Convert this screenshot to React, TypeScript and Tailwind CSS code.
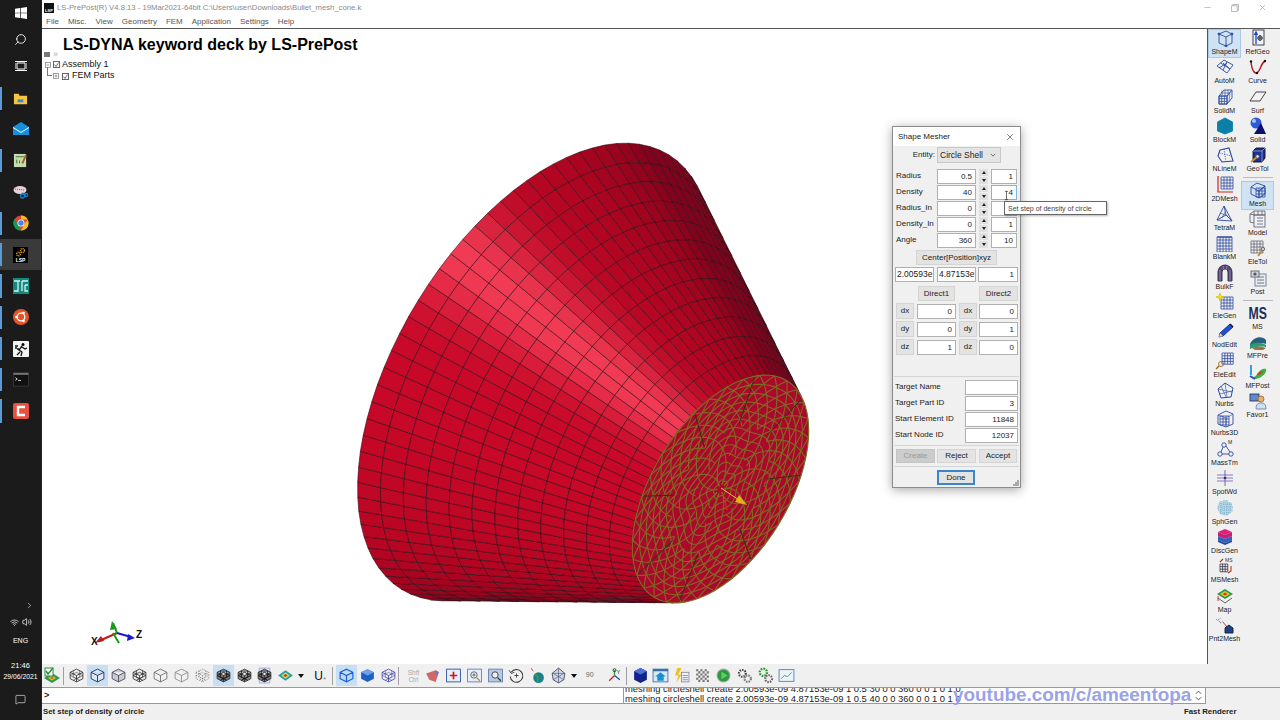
import type { ReactNode } from 'react';
import { ChevronRight, MessageSquare, Minus, Search, Volume2, Wifi, X } from 'lucide-react';

// ---- cone geometry, page coordinates ----
const AX = [0.524, -0.852];
const BX = [0.852, 0.524];
const FAR = { c: [535, 372], a: 255, b: 137 };
const NEAR = { c: [720.5, 489], a: 127, b: 68 };
const RINGS = 12;
const SEGS = 84;

const pt = (u: number, v: number) => {
  const cx = FAR.c[0] + (NEAR.c[0] - FAR.c[0]) * v;
  const cy = FAR.c[1] + (NEAR.c[1] - FAR.c[1]) * v;
  const a = (FAR.a + (NEAR.a - FAR.a) * v) * Math.cos(u);
  const b = (FAR.b + (NEAR.b - FAR.b) * v) * Math.sin(u);
  return [cx + a * AX[0] + b * BX[0], cy + a * AX[1] + b * BX[1]];
};

const shade = (u: number) => {
  const deg = (u * 180) / Math.PI;
  const diff = Math.max(0, Math.cos(((deg + 105) * Math.PI) / 180));
  const spec = Math.pow(Math.max(0, Math.cos(((deg + 78) * Math.PI) / 180)), 42);
  const r = 128 + 72 * Math.pow(diff, 0.6) + 46 * spec;
  const g = 2 + 6 * diff + 52 * spec;
  const b = 28 + 12 * diff + 46 * spec;
  return `rgb(${Math.round(r)},${Math.round(g)},${Math.round(b)})`;
};

const quads: { d: string; fill: string }[] = [];
for (let i = 0; i < SEGS; i++) {
  const u0 = (i / SEGS) * Math.PI * 2;
  const u1 = ((i + 1) / SEGS) * Math.PI * 2;
  for (let j = 0; j < RINGS; j++) {
    const p = [pt(u0, j / RINGS), pt(u1, j / RINGS), pt(u1, (j + 1) / RINGS), pt(u0, (j + 1) / RINGS)];
    let area = 0;
    p.forEach((q, k) => {
      const n = p[(k + 1) % 4];
      area += q[0] * n[1] - n[0] * q[1];
    });
    if (area > 0) quads.push({ d: p.map((q) => q.map((x) => x.toFixed(1)).join(',')).join(' '), fill: shade(u0) });
  }
}

const capPt = (r: number, t: number) => {
  const a = NEAR.a * r * Math.cos(t);
  const b = NEAR.b * r * Math.sin(t);
  return `${(NEAR.c[0] + a * AX[0] + b * BX[0]).toFixed(1)},${(NEAR.c[1] + a * AX[1] + b * BX[1]).toFixed(1)}`;
};

const capLines: string[] = [];
for (let i = 1; i <= 13; i++) {
  const pts: string[] = [];
  for (let k = 0; k <= 72; k++) {
    const t = (k / 72) * Math.PI * 2;
    const wob = 1 - 0.12 * (1 - i / 13) * Math.cos(t * 5 + 0.6);
    pts.push(capPt((i / 13) * wob, t));
  }
  capLines.push(pts.join(' '));
}
// thin the fan out toward the middle so it stays an open hatch
[-1, 1].forEach((dir) => {
  for (let i = 0; i < 32; i++) {
    const from = i % 4 === 0 ? 0.04 : i % 2 === 0 ? 0.3 : 0.55;
    const pts: string[] = [];
    for (let k = 0; k <= 14; k++) {
      const r = from + ((1 - from) * k) / 14;
      pts.push(capPt(r, (i / 32) * Math.PI * 2 + dir * (1 - r) * 1.3));
    }
    capLines.push(pts.join(' '));
  }
});

function Cone() {
  const spokes = [0.3, 1.1, 1.9, 2.75, 3.5, 4.3, 5.1, 5.8];
  return (
    <svg viewBox="42 29 1165 635" className="absolute inset-0 w-full h-full">
      {quads.map((q, i) => (
        <polygon key={i} points={q.d} fill={q.fill} stroke="#300a10" strokeWidth="0.6" />
      ))}
      <ellipse cx={NEAR.c[0]} cy={NEAR.c[1]} rx={NEAR.a} ry={NEAR.b} transform={`rotate(-58.4 ${NEAR.c[0]} ${NEAR.c[1]})`} fill="#ac082c" />
      {capLines.map((l, i) => (
        <polyline key={i} points={l} fill="none" stroke="#7e6a22" strokeWidth="1.1" />
      ))}
      {spokes.map((t) => (
        <polyline key={t} points={`${capPt(0.58, t)} ${capPt(0.98, t + 0.03)}`} fill="none" stroke="#3a2a10" strokeWidth="1" />
      ))}
      <line x1="721" y1="488" x2="742" y2="502" stroke="#e8c030" strokeWidth="1" />
      <polygon points="747,505 735,502 739,495" fill="#e0b020" />
      <line x1="725" y1="500" x2="727" y2="510" stroke="#e03020" strokeWidth="1" />
    </svg>
  );
}

// ---- palette icons ----
const I = ({ children }: { children: ReactNode }) => (
  <svg viewBox="0 0 20 18" className="w-[20px] h-[18px]" fill="none" stroke="#2d4aa0" strokeWidth="0.9">
    {children}
  </svg>
);

const Grid = ({ x, y, n = 4, s = 3, c = '#2d4aa0' }: { x: number; y: number; n?: number; s?: number; c?: string }) => {
  let d = '';
  for (let i = 0; i <= n; i++) d += `M${x} ${y + i * s}h${n * s}M${x + i * s} ${y}v${n * s}`;
  return <path d={d} stroke={c} strokeWidth="0.8" />;
};

const icons: Record<string, ReactNode> = {
  ShapeM: <I><path d="M4 5l7-3 6 3v9l-6 3-7-3zM4 5l7 3 6-3M11 8v9" /><circle cx="4" cy="5" r="1" fill="#2d4aa0" /><circle cx="17" cy="5" r="1" fill="#2d4aa0" /><circle cx="11" cy="17" r="1" fill="#2d4aa0" /></I>,
  RefGeo: <I><rect x="5" y="1" width="11" height="15" fill="#eef3fb" stroke="#333" /><path d="M8 15V4M6.5 6L8 3l1.5 3" stroke="#1f3fd0" strokeWidth="1.3" /><circle cx="12" cy="9" r="2.2" stroke="#222" /><path d="M12 6v6M9.5 9h5" stroke="#222" /></I>,
  AutoM: <I><path d="M2 8l7-6 9 5-6 8zM5.5 5l9 5.5M8 12l4-8M4 10l8-5M15 11l-7-6" /></I>,
  Curve: <I><path d="M3 4c1 9 4 13 7 10s3-9 7-11" stroke="#b01818" strokeWidth="1.4" /><circle cx="3" cy="3.5" r="1.2" fill="#111" stroke="none" /><circle cx="17" cy="3" r="1.2" fill="#111" stroke="none" /><circle cx="9" cy="15" r="1.2" fill="#111" stroke="none" /></I>,
  SolidM: <I><path d="M4 8l5-6h8v8l-5 6H4zM4 8h8v8M12 8l5-6" /><Grid x={4} y={8} n={3} s={2.7} /><path d="M7 2.5v5M10 2v6M13 2v6M15 4l-1 10M6 5h9" strokeWidth="0.6" /></I>,
  Surf: <I><path d="M2 13l6-9h10l-6 9z" stroke="#333" fill="#f2f2f2" /></I>,
  BlockM: <I><path d="M10 1l7.5 4v9L10 17l-7.5-3V5z" fill="#0b7fa8" stroke="#0b7fa8" /></I>,
  Solid: <I><circle cx="8" cy="6" r="5.5" fill="#2d5bd8" stroke="none" /><circle cx="6" cy="4" r="2" fill="#a8c4f4" stroke="none" /><path d="M13 6l5 11H6z" fill="#10106a" stroke="none" /></I>,
  NLineM: <I><path d="M5 4l9-2 4 13-11 1-4-6z" strokeWidth="1.1" /><path d="M9 3l2 13M4.5 7l12 3" strokeDasharray="1 1.4" /></I>,
  GeoTol: <I><path d="M5 5l3-3h9v10l-3 4H5z" fill="#1b2f95" stroke="#111" /><path d="M5 5h9v11M14 5l3-3" stroke="#8898e0" /><path d="M3 16l6-5" stroke="#d09030" strokeWidth="2" /><circle cx="9.5" cy="10.5" r="1.8" fill="#ddd" stroke="#555" /></I>,
  '2DMesh': <I><Grid x={6} y={1} n={4} s={3} /><path d="M3 0v16h15" stroke="#d02020" strokeWidth="1.2" /></I>,
  Mesh: <I><path d="M3 6l6-4 8 3-6 5zM3 6v7l8 4V10M11 10l6-5v8l-6 4" /><Grid x={8} y={7} n={3} s={3} /></I>,
  TetraM: <I><path d="M9 1L2 15l15 1zM9 1l2 9-9 5M11 10l6 6" /><path d="M5 8l8 3M7 13l3-6" strokeWidth="0.6" /></I>,
  Model: <I><rect x="6" y="5" width="11" height="12" fill="#eef2f8" stroke="#667" /><path d="M2 4l4-3h11v4H6zM2 4v8l4 1M9 8h6M9 11h6M9 14h6" stroke="#667" /><path d="M6 1v4M10 1v4M14 1v4" stroke="#667" /></I>,
  BlankM: <I><Grid x={2} y={3} n={5} s={3} /><path d="M2 3h15" strokeWidth="1.2" /></I>,
  EleTol: <I><Grid x={3} y={2} n={4} s={3} c="#667" /><path d="M10 17l5-6" stroke="#d08020" strokeWidth="1.6" /><circle cx="15" cy="10" r="1.7" fill="#ccc" stroke="#666" /></I>,
  BulkF: <I><path d="M3 17V8a7 7 0 0 1 14 0v9h-4V8a3 3 0 0 0-6 0v9z" fill="#5a4a78" stroke="#2a2440" /><path d="M5 6v11M15 6v11M8 2l1 4M12 2l-1 4" stroke="#a098b8" strokeWidth="0.7" /></I>,
  Post: <I><rect x="7" y="5" width="11" height="12" fill="#e8eef6" stroke="#778" /><path d="M9 8h7M9 11h7M9 14h7" stroke="#667" /><rect x="3" y="2" width="8" height="6" fill="#c9d3df" stroke="#666" /><circle cx="7" cy="5" r="1.6" fill="#555" stroke="none" /></I>,
  EleGen: <I><Grid x={6} y={4} n={4} s={3} /><path d="M5 0l1 3 3 1-3 1-1 3-1-3-3-1 3-1z" fill="#f0e020" stroke="#d8c818" /></I>,
  NodEdit: <I><path d="M4 15l1-4L15 2l3 3-10 9z" fill="#1f4ed8" stroke="#123080" /><path d="M4 15l1-4 3 3z" fill="#f0d090" stroke="none" /><path d="M15 2l3 3" stroke="#222" strokeWidth="1.6" /></I>,
  MFPre: <I><path d="M2 11c3-7 12-9 16-4v4c-5-2-12-1-16 3z" fill="#285f80" stroke="none" /><path d="M2 12c5-3 11-3 16 0v2c-6-1-11 0-16 2z" fill="#2d9a70" stroke="none" /><path d="M4 15c4-1 9-2 14 0l-3 2H7z" fill="#a07040" stroke="none" /></I>,
  EleEdit: <I><Grid x={7} y={1} n={4} s={2.8} /><circle cx="6" cy="12" r="2.5" stroke="#a06820" /><path d="M4 14l-3 3" stroke="#a06820" strokeWidth="1.5" /></I>,
  MFPost: <I><path d="M2 14c3 2 6-1 8-4s5-5 8-4c1 3-2 6-5 8s-7 3-11 0z" fill="#40b040" stroke="none" /><path d="M9 11c2-2 4-3 6-3-1 2-3 4-6 4z" fill="#e03030" stroke="none" /><path d="M3 2v10" stroke="#30a0e0" strokeWidth="2" /><path d="M2 13l5 3" stroke="#2050c0" strokeWidth="2" /></I>,
  Nurbs: <I><path d="M3 8l7-6 8 5-2 9-10 1z" strokeWidth="1" /><path d="M6 5l5 11M10 2l2 14M3 8l14 3M5 13l12-3" strokeWidth="0.6" /></I>,
  Favor1: <I><rect x="2" y="2" width="9" height="7" fill="#5a8ad0" stroke="#335" /><circle cx="13" cy="7" r="3" fill="#e8b070" stroke="#a07030" /><path d="M8 17c0-5 2-6 5-6s5 1 5 6z" fill="#cfe0f4" stroke="#6688aa" /></I>,
  Nurbs3D: <I><path d="M3 5l8-4 7 3v10l-7 3-8-3z" /><Grid x={5} y={6} n={3} s={3} /><path d="M3 5l8 3 7-4M11 8v9" strokeWidth="0.6" /></I>,
  MassTm: <I><circle cx="5" cy="14" r="2.2" /><circle cx="9" cy="5" r="2.2" /><circle cx="16" cy="14" r="2.2" /><path d="M6 12l2-5M11 6l4 6M7 14h7" /><text x="13" y="4" fontSize="5" stroke="none" fill="#222">M</text></I>,
  SpotWd: <I><path d="M2 6h16M2 9h16M2 12h16" stroke="#8878c8" strokeWidth="1" /><path d="M10 1v16" stroke="#6858a8" /><circle cx="10" cy="9" r="1.3" fill="#30307a" stroke="none" /></I>,
  SphGen: <I><path d="M4 3l7-2 6 4 1 7-6 5-7-2-3-6z" fill="#b8d8e6" stroke="none" /><path d="M4 5h13M3 8h15M3 11h14M5 14h10M6 2v14M9 1v16M12 1v16M15 3v12" stroke="#6ea0c0" strokeWidth="0.7" strokeDasharray="1 1" /></I>,
  DiscGen: <I><path d="M3 4l7-3 7 3-7 3z" fill="#e0207a" stroke="none" /><path d="M3 4v4l7 3 7-3V4l-7 3z" fill="#c82070" stroke="none" /><path d="M3 8v4l7 3 7-3V8l-7 3z" fill="#3060c0" stroke="none" /><path d="M3 12v2l7 3 7-3v-2l-7 3z" fill="#2048a0" stroke="none" /></I>,
  MSMesh: <I><Grid x={5} y={7} n={3} s={2.6} c="#334" /><path d="M5 5l3-3M16 9v5l-3 2" stroke="#c03020" strokeWidth="1.1" /><text x="10" y="5" fontSize="5" stroke="none" fill="#333">MS</text></I>,
  Map: <I><path d="M2 7l8-5 8 5-8 5z" fill="#2a9a50" stroke="none" /><path d="M5 7l5-3 5 3-5 3z" fill="#e0d020" stroke="none" /><path d="M7.5 7L10 5.5 12.5 7 10 8.5z" fill="#e03030" stroke="none" /><path d="M3 11l7 5 7-5" stroke="#555" /><path d="M3 9v5" stroke="#c02020" /></I>,
  Pnt2Mesh: <I><path d="M3 4l3-2M5 7l3-2" stroke="#667" strokeDasharray="1 1" /><path d="M8 6l4 5" stroke="#d02020" /><path d="M10 12l4-3 4 3v5H10z" fill="#1e3f90" stroke="#122" /><path d="M1 3l5 4" stroke="#667" strokeDasharray="1 1" /></I>,
};

function Tool({ name, active }: { name: string; active?: boolean }) {
  return (
    <div className={`w-[33px] h-[29.35px] flex flex-col items-center ${active ? 'bg-[#cfe3f5] shadow-[inset_0_0_0_1px_#a8cbe8]' : ''}`}>
      <div className="h-[18px] flex items-center justify-center">
        {name === 'MS' ? <span className="text-[17px] leading-none font-bold text-[#1c2f5c] [transform:scaleX(0.72)]">MS</span> : icons[name]}
      </div>
      <span className="text-[7px] leading-[9px] text-[#222] whitespace-nowrap">{name}</span>
    </div>
  );
}

// ---- bottom toolbar icons ----
const T = ({ children, active }: { children: ReactNode; active?: boolean }) => (
  <div className={`w-[20.9px] h-[21px] shrink-0 flex items-center justify-center ${active ? 'bg-[#c7dff4]' : ''}`}>
    <svg viewBox="0 0 16 16" className="w-[17px] h-[17px]" fill="none" stroke="#333" strokeWidth="0.8">
      {children}
    </svg>
  </div>
);

const cube = 'M2 5l6-3 6 3v6l-6 3-6-3zM2 5l6 3 6-3M8 8v6';
const cubeMesh = 'M5 3.5v6l6 3M11 3.5v6l-6 3M2 8l6 3 6-3M2 8l6-3 6 3';
const Sep = ({ className }: { className: string }) => <div className={`w-px h-[18px] bg-[#a0a0a0] shrink-0 ${className}`} />;
const Drop = ({ className = '' }: { className?: string }) => (
  <div className={`w-[10px] shrink-0 flex justify-center ${className}`}>
    <div className="border-x-[3px] border-x-transparent border-t-[4px] border-t-[#111]" />
  </div>
);

function BottomBar() {
  return (
    <div className="h-[24px] bg-[#f0f0f0] flex items-center border-b border-[#999] shrink-0">
      <div className="w-[18px] h-[18px] shrink-0 ml-[1px]">
        <svg viewBox="0 0 18 18" className="w-[18px] h-[18px]" fill="none">
          <path d="M1 11l8-5 8 5-8 5z" fill="#2a9a50" />
          <path d="M5 11l4-2.5 4 2.5-4 2.5z" fill="#e0c020" />
          <path d="M7.5 11L9 10l1.5 1L9 12z" fill="#e03020" />
          <rect x="2" y="1" width="8" height="8" fill="#fff" stroke="#2a8a40" />
          <path d="M3 4l2 3 5-6" stroke="#1f8f30" strokeWidth="1.4" />
        </svg>
      </div>
      <Sep className="ml-[2px]" />
      <div className="w-[2.5px] shrink-0" />
      <T><path d={cube} /><path d={cubeMesh} strokeWidth="0.5" /></T>
      <T active><path d={cube} stroke="#224" fill="#dbe9f6" /></T>
      <T><path d={cube} stroke="#445" fill="#c8ccd4" /></T>
      <T><path d={cube} /><path d={cubeMesh} /></T>
      <T><path d={cube} stroke="#666" /></T>
      <T><path d={cube} stroke="#888" /></T>
      <T><path d={cube} stroke="#777" strokeDasharray="1 1.2" /><path d={cubeMesh} stroke="#777" strokeDasharray="1 1.2" /></T>
      <T active><path d={cube} fill="#777" /><path d={cubeMesh} stroke="#111" /></T>
      <T><path d={cube} fill="#888" /><path d={cubeMesh} stroke="#111" /></T>
      <T><path d="M3 1h10v14H3z" stroke="#99a8d8" fill="#dfe6f8" /><path d={cube} fill="#777" /><path d={cubeMesh} stroke="#111" /></T>
      <T><path d="M1 8l7-5 7 5-7 5z" fill="#22a0b0" stroke="none" /><path d="M4 8l4-3 4 3-4 3z" fill="#e0d040" stroke="none" /><path d="M6 8l2-1.5L10 8l-2 1.5z" fill="#e03020" stroke="none" /></T>
      <Drop />
      <div className="w-[18px] ml-[3px] shrink-0 relative text-[#111] text-[12px] leading-none">
        <span className="pl-[5px]">U</span>
        <span className="absolute left-[14px] top-[6px] text-[#777] text-[7px]">*</span>
      </div>
      <Sep className="ml-[5px]" />
      <div className="w-[2.5px] shrink-0" />
      <T active><path d={cube} stroke="#1b5fd0" strokeWidth="1.1" fill="#bcd8f8" /></T>
      <T><path d="M2 5l6-3 6 3v6l-6 3-6-3z" fill="#1f5fc8" stroke="none" /><path d="M2 5l6 3 6-3-6-3z" fill="#6fa0e8" stroke="none" /></T>
      <T><path d={cube} stroke="#4a4ab0" /><path d={cubeMesh} stroke="#4a4ab0" strokeWidth="0.5" /></T>
      <Sep className="ml-[0px]" />
      <div className="w-[20px] ml-[4px] shrink-0 text-center text-[6.5px] leading-[7px] text-[#aaa]">Shft<br />Ctrl</div>
      <div className="ml-[-1px]" />
      <T><path d="M2 6l9-3 3 2-3 9-6-2z" fill="#d06868" stroke="none" /><path d="M11 3l3 2-3 3z" fill="#5b80c0" stroke="none" /></T>
      <T><rect x="1.5" y="2" width="13" height="12" stroke="#1f4aa0" fill="#e6eefa" /><path d="M8 4.5v7M4.5 8h7" stroke="#d01818" strokeWidth="1.6" /></T>
      <T><rect x="1.5" y="2" width="13" height="12" stroke="#5a7ab0" fill="#e6eefa" /><circle cx="7.5" cy="7.5" r="3" stroke="#555" /><path d="M10 10l3 3" stroke="#b09030" strokeWidth="1.2" /><path d="M6 7.5h3M7.5 6v3" stroke="#555" /></T>
      <T><rect x="1.5" y="2" width="13" height="12" stroke="#5a7ab0" fill="#b8cae0" /><circle cx="7.5" cy="7.5" r="3" stroke="#333" fill="#e8eef6" /><path d="M10 10l3 3" stroke="#333" strokeWidth="1.2" /></T>
      <T><path d="M3 5a6 6 0 1 1-1 4" stroke="#333" strokeWidth="1" /><path d="M1 3l2 3 3-1" stroke="#333" /><path d="M8 6v4M6 8h4" /></T>
      <T><circle cx="9" cy="10" r="5" fill="#1f7f90" stroke="none" /><path d="M6 7c2 1 3 3 2 7" stroke="#40a030" strokeWidth="1.6" /><path d="M2 1l2 3" stroke="#d03030" /></T>
      <T><path d="M8 1l6 5-1 6-5 3-5-3-1-6z" fill="#c8d8ee" stroke="#445" /><path d="M8 1v14M2 6h12M3 12l10-6M13 12L3 6" stroke="#445" strokeWidth="0.5" /></T>
      <Drop className="ml-[0.5px]" />
      <div className="w-[14px] ml-[3.5px] shrink-0 text-center text-[7px] text-[#666]">90</div>
      <div className="ml-[7px]" />
      <T><path d="M8 8l-5 5" stroke="#d02020" strokeWidth="1.2" /><path d="M8 8l5 4" stroke="#2040c0" strokeWidth="1.2" /><path d="M8 8V3" stroke="#20a030" strokeWidth="1.2" /><circle cx="8" cy="3" r="1.4" stroke="#222" /><text x="10" y="7" fontSize="5" stroke="none" fill="#222">Y</text></T>
      <Sep className="ml-[1px]" />
      <div className="w-[3px] shrink-0" />
      <T><path d="M2 4l6-3 6 3v8l-6 3-6-3z" fill="#12248c" stroke="none" /><path d="M2 4l6 3 6-3-6-3z" fill="#4a70d8" stroke="none" /></T>
      <T><rect x="1" y="2" width="14" height="12" fill="#d8e8f8" stroke="#3a6aa0" /><path d="M1 2h14v2H1z" fill="#3a6aa0" stroke="none" /><path d="M8 5l5 4h-2v4H5V9H3z" fill="#1a90d0" stroke="none" /></T>
      <T><path d="M4 1L2 8h3L3 15l5-8H5l3-6z" fill="#f0c020" stroke="none" /><rect x="8" y="5" width="7" height="9" fill="#eef2f8" stroke="#889" /><path d="M9 8h5M9 10h5M9 12h5" stroke="#889" /></T>
      <T><path d="M2 2h2v2H2zM6 2h2v2H6zM10 2h2v2h-2zM4 4h2v2H4zM8 4h2v2H8zM12 4h2v2h-2zM2 6h2v2H2zM6 6h2v2H6zM10 6h2v2h-2zM4 8h2v2H4zM8 8h2v2H8zM12 8h2v2h-2zM2 10h2v2H2zM6 10h2v2H6zM10 10h2v2h-2zM4 12h2v2H4zM8 12h2v2H8zM12 12h2v2h-2z" fill="#777" stroke="none" /></T>
      <T><circle cx="8" cy="8" r="6.5" fill="#5a5a5a" stroke="none" opacity="0.5" /><circle cx="8" cy="8" r="5.5" fill="#2a9a40" stroke="none" /><path d="M6 4.5L12 8l-6 3.5z" fill="#5fd060" stroke="none" /></T>
      <T><circle cx="6" cy="6" r="3.2" stroke="#444" strokeWidth="2" strokeDasharray="1.4 1" /><circle cx="11" cy="11" r="3" stroke="#777" strokeWidth="2" strokeDasharray="1.4 1" /></T>
      <T><circle cx="6" cy="5" r="3.4" stroke="#2a9a30" strokeWidth="2.2" strokeDasharray="1.6 1" /><circle cx="11" cy="11" r="3.2" stroke="#666" strokeWidth="2" strokeDasharray="1.4 1" /></T>
      <T><rect x="1" y="2.5" width="14" height="11" fill="#eaf2fb" stroke="#4a7ab0" /><path d="M3 11l3-3 3 1 4-4" stroke="#30a040" /></T>
    </div>
  );
}

// ---- dialog parts ----
const Field = ({ children, className = '', w, edge = 'border-[#b0b0b0]' }: { children?: ReactNode; className?: string; w: string; edge?: string }) => (
  <div className={`${w} ${edge} h-[15px] shrink-0 bg-white border text-right pr-[3px] leading-[13px] overflow-hidden whitespace-nowrap ${className}`}>{children}</div>
);

const Btn = ({ children, w, className = '', tone = 'bg-[#e3e3e3] border border-[#d4d4d4]' }: { children: ReactNode; w: string; className?: string; tone?: string }) => (
  <div className={`${w} ${tone} h-full shrink-0 text-center flex items-center justify-center whitespace-nowrap ${className}`}>{children}</div>
);

const Spinner = () => (
  <div className="w-[9px] h-[15px] ml-[3px] mr-[3px] shrink-0 flex flex-col gap-px">
    <div className="flex-1 bg-[#e0e0e0] flex items-center justify-center"><div className="border-x-[2px] border-x-transparent border-b-[3px] border-b-[#222]" /></div>
    <div className="flex-1 bg-[#e0e0e0] flex items-center justify-center"><div className="border-x-[2px] border-x-transparent border-t-[3px] border-t-[#222]" /></div>
  </div>
);

function SpinRow({ label, value, step, focus }: { label: string; value: string; step?: string; focus?: boolean }) {
  return (
    <div className="h-[16px] pl-[3px] flex items-center">
      <span className="w-[41px] shrink-0 whitespace-nowrap">{label}</span>
      <Field w="w-[39px]">{value}</Field>
      <Spinner />
      <Field w="w-[26px]" edge={focus ? 'border-[#7fb4dc]' : 'border-[#b0b0b0]'}>{step}</Field>
    </div>
  );
}

const DirRow = ({ a, av, b, bv, className = '' }: { a: string; av: string; b: string; bv: string; className?: string }) => (
  <div className={`h-[16px] pl-[3px] flex items-center ${className}`}>
    <Btn w="w-[18px]">{a}</Btn>
    <Field w="w-[39px]" className="ml-[3px]">{av}</Field>
    <Btn w="w-[18px]" className="ml-[3px]">{b}</Btn>
    <Field w="w-[39px]" className="ml-[2px]">{bv}</Field>
  </div>
);

const TargetRow = ({ label, value }: { label: string; value?: string }) => (
  <div className="h-[16px] pl-[2px] flex items-center">
    <span className="w-[70px] shrink-0 whitespace-nowrap">{label}</span>
    <Field w="w-[53px]">{value}</Field>
  </div>
);

function ShapeMesher() {
  return (
    <div className="absolute left-[850px] top-[97px] w-[129px] h-[362px] bg-[#f0f0f0] border border-[#8c8c8c] shadow-[0_2px_10px_rgba(0,0,0,0.35)] text-[8px] leading-none text-[#222]">
      <div className="h-[19px] bg-white flex items-center justify-between pl-[5px] pr-[5px]">
        <span>Shape Mesher</span>
        <X className="w-[10px] h-[10px] text-[#333]" strokeWidth={1.5} />
      </div>
      <div className="mt-[1px] h-[16px] flex items-center">
        <span className="w-[44px] text-right pr-[2px] shrink-0">Entity:</span>
        <div className="w-[64px] h-[16px] bg-[#e4e4e4] border border-[#c8c8c8] flex items-center justify-between pl-[2px] pr-[4px] text-[8.5px]">
          Circle Shell
          <svg viewBox="0 0 8 5" className="w-[6px] h-[4px]" fill="none" stroke="#444"><path d="M1 1l3 3 3-3" /></svg>
        </div>
      </div>
      <div className="mt-[5px]">
        <SpinRow label="Radius" value="0.5" step="1" />
        <SpinRow label="Density" value="40" step="4" focus />
        <SpinRow label="Radius_In" value="0" />
        <SpinRow label="Density_In" value="0" step="1" />
        <SpinRow label="Angle" value="360" step="10" />
      </div>
      <div className="mt-[2px] h-[15px] pl-[23px] flex">
        <Btn w="w-[81px]">Center[Position]xyz</Btn>
      </div>
      <div className="mt-[2px] pl-[2px] flex">
        <Field w="w-[39px]" className="text-left pl-[1px] pr-0 text-[8.5px]">2.00593e</Field>
        <Field w="w-[39px]" className="text-left pl-[1px] pr-0 ml-[3px] text-[8.5px]">4.87153e</Field>
        <Field w="w-[40px]" className="ml-[2px]">1</Field>
      </div>
      <div className="mt-[4px] h-[15px] pl-[25px] flex">
        <Btn w="w-[37px]">Direct1</Btn>
        <Btn w="w-[39px]" className="ml-[24px]">Direct2</Btn>
      </div>
      <DirRow a="dx" av="0" b="dx" bv="0" className="mt-[2px]" />
      <DirRow a="dy" av="0" b="dy" bv="1" className="mt-[2px]" />
      <DirRow a="dz" av="1" b="dz" bv="0" className="mt-[2px]" />
      <div className="mt-[21px] mx-[1px] h-px bg-[#d4d4d4]" />
      <div className="mt-[2px]">
        <TargetRow label="Target Name" />
        <TargetRow label="Target Part ID" value="3" />
        <TargetRow label="Start Element ID" value="11848" />
        <TargetRow label="Start Node ID" value="12037" />
      </div>
      <div className="mt-[2px] mx-[1px] h-px bg-[#d4d4d4]" />
      <div className="mt-[3px] h-[14px] pl-[3px] flex">
        <Btn w="w-[39px]" tone="bg-[#cccccc] border border-[#c4c4c4] text-[#999]">Create</Btn>
        <Btn w="w-[39px]" className="ml-[2px]">Reject</Btn>
        <Btn w="w-[38px]" className="ml-[3px]">Accept</Btn>
      </div>
      <div className="mt-[3px] mx-[1px] h-px bg-[#d4d4d4]" />
      <div className="mt-[3px] h-[15px] pl-[44px] flex">
        <Btn w="w-[38px]" tone="bg-[#e3e3e3] border-2 border-[#3a86c8]">Done</Btn>
      </div>
      <svg viewBox="0 0 6 6" className="absolute right-[1px] bottom-[1px] w-[6px] h-[6px]" fill="#aaa">
        <path d="M4 0h2v2H4zM2 2h2v2H2zM4 2h2v2H4zM0 4h2v2H0zM2 4h2v2H2zM4 4h2v2H4z" />
      </svg>
      {/* mouse cursor over the step field */}
      <svg viewBox="0 0 6 12" className="absolute left-[111px] top-[63px] w-[5px] h-[11px]" fill="none" stroke="#222" strokeWidth="0.8">
        <path d="M1 1h4M3 1v10M1 11h4" />
      </svg>
      <div className="absolute left-[111px] top-[74px] w-[103px] h-[14px] bg-white border border-[#666] shadow-[1px_1px_2px_rgba(0,0,0,0.3)] flex items-center pl-[3px] text-[7px] text-[#444] whitespace-nowrap">
        Set step of density of circle
      </div>
    </div>
  );
}

// ---- taskbar ----
const Bar = ({ on, hi, children }: { on?: boolean; hi?: boolean; children: ReactNode }) => (
  <div className={`h-[31.3px] flex items-center justify-center relative ${hi ? 'bg-[#3a3a3a]' : ''}`}>
    {on && <div className="absolute left-0 top-[4px] bottom-[4px] w-[2px] bg-[#5b9bd5]" />}
    {children}
  </div>
);

function Taskbar() {
  return (
    <div className="w-[41px] shrink-0 h-full bg-[#1b1b1b] flex flex-col text-white">
      <div className="h-[26.5px] flex items-center justify-center">
        <svg viewBox="0 0 12 12" className="w-[12px] h-[12px]" fill="#fff"><path d="M0 1.7L5 1v4.7H0zM5.7 .9L12 0v5.7H5.7zM0 6.3h5V11L0 10.3zM5.7 6.3H12V12l-6.3-.9z" /></svg>
      </div>
      <div className="h-[26.5px] flex items-center justify-center"><Search className="w-[13px] h-[13px] -scale-x-100" strokeWidth={1.6} /></div>
      <div className="h-[26.5px] flex items-center justify-center">
        <svg viewBox="0 0 12 12" className="w-[12px] h-[12px]" fill="none" stroke="#fff"><path d="M2 3h8v6H2zM0 1.5h12M0 10.500h12M0 3v6M12 3v6" /></svg>
      </div>
      <div className="h-[3px]" />
      <Bar on>
        <svg viewBox="0 0 16 16" className="w-[15px] h-[15px]"><path d="M1 3h5l1 2h8v9H1z" fill="#f4c445" /><rect x="5" y="9" width="6" height="3" fill="#3a8ad0" /></svg>
      </Bar>
      <Bar>
        <svg viewBox="0 0 16 16" className="w-[16px] h-[16px]"><path d="M0 6l8-5 8 5v8H0z" fill="#1590dc" /><path d="M0 6l8 5 8-5v1L8 12 0 7z" fill="#fff" /></svg>
      </Bar>
      <Bar on>
        <svg viewBox="0 0 16 16" className="w-[15px] h-[15px]"><rect x="1" y="1" width="13" height="14" fill="#c6dcae" /><path d="M3 4h9M4 11V7M7 11V8" stroke="#3d6a2c" /><path d="M14 2l-4 9" stroke="#a06020" strokeWidth="2" /></svg>
      </Bar>
      <Bar>
        <svg viewBox="0 0 16 16" className="w-[16px] h-[16px]"><ellipse cx="7" cy="6" rx="6.500" ry="4" fill="#e8cfd8" /><path d="M2 5l9 1" stroke="#c84060" strokeDasharray="1 1" /><path d="M9 9l4 2" stroke="#1580d0" strokeWidth="1.5" /><circle cx="9.500" cy="12" r="2" fill="none" stroke="#1580d0" strokeWidth="1.300" /><circle cx="13" cy="11" r="1.600" fill="none" stroke="#1580d0" strokeWidth="1.200" /></svg>
      </Bar>
      <Bar on>
        <svg viewBox="0 0 16 16" className="w-[16px] h-[16px]"><circle cx="8" cy="8" r="7.500" fill="#db4437" /><path d="M8 .5A7.500 7.500 0 0 1 14.700 4.500H8z" fill="#f4c20d" /><path d="M1.500 4L5 10l3 5.500A7.500 7.500 0 0 1 1.500 4z" fill="#0f9d58" /><path d="M14.700 4.500A7.500 7.500 0 0 1 8 15.500l3-5.500z" fill="#f4c20d" /><circle cx="8" cy="8" r="3.500" fill="#fff" /><circle cx="8" cy="8" r="2.700" fill="#4285f4" /></svg>
      </Bar>
      <Bar on hi>
        <div className="w-[15px] h-[16px] bg-black relative flex items-end justify-center">
          <svg viewBox="0 0 15 10" className="absolute top-0 left-0 w-[15px] h-[10px]" fill="none" stroke="#e8a010" strokeWidth="1.500"><circle cx="9.500" cy="3.500" r="2" strokeDasharray="1 .7" /><circle cx="5.500" cy="7" r="1.800" strokeDasharray="1 .7" /></svg>
          <span className="text-[5px] leading-[6px] font-bold text-white">LSP</span>
        </div>
      </Bar>
      <Bar on>
        <svg viewBox="0 0 16 16" className="w-[16px] h-[16px]"><rect width="16" height="16" fill="#128a80" /><path d="M1 3h6M5 3v10H1M9 3h6M9 3v10M12 7h3M12 7v6h3" stroke="#d8f0ec" strokeWidth="1.300" fill="none" /></svg>
      </Bar>
      <Bar on>
        <svg viewBox="0 0 16 16" className="w-[16px] h-[16px]"><circle cx="8" cy="8" r="8" fill="#e0552a" /><circle cx="8" cy="8" r="3.800" fill="none" stroke="#fff" strokeWidth="1.300" /><circle cx="3.500" cy="8" r="1.300" fill="#fff" /><circle cx="10.500" cy="4" r="1.300" fill="#fff" /><circle cx="10.500" cy="12" r="1.300" fill="#fff" /></svg>
      </Bar>
      <Bar on>
        <svg viewBox="0 0 16 16" className="w-[16px] h-[16px]"><rect width="16" height="16" rx="1" fill="#f4f4f4" /><circle cx="10" cy="3.500" r="1.500" /><path d="M9 5L6 9l3 2-1 4M9 6l3 2 2-1M6 8H4M7 11l-3 3M2 5h3M2 7h2" stroke="#111" strokeWidth="1.300" fill="none" /></svg>
      </Bar>
      <Bar on>
        <svg viewBox="0 0 16 16" className="w-[16px] h-[15px]"><rect width="16" height="14" y="1" fill="#111" stroke="#555" strokeWidth="0.5" /><rect width="16" height="2" y="1" fill="#777" /><path d="M2 6l2 1.500-2 1.500M5 9h3" stroke="#ddd" fill="none" /></svg>
      </Bar>
      <Bar on>
        <svg viewBox="0 0 16 16" className="w-[16px] h-[16px]"><rect width="16" height="16" rx="2" fill="#e8503f" /><path d="M12 4H5v8h7" stroke="#fff" strokeWidth="2.400" fill="none" /></svg>
      </Bar>
      <div className="mt-auto flex flex-col items-center pb-[15px]">
        <ChevronRight className="w-[9px] h-[9px] self-end mr-[7px]" strokeWidth={1.500} />
        <div className="mt-[7px] flex gap-[3px] items-center">
          <Wifi className="w-[9px] h-[9px]" strokeWidth={1.800} />
          <Volume2 className="w-[10px] h-[10px]" strokeWidth={1.800} />
        </div>
        <span className="mt-[9px] text-[7px] leading-[9px]">ENG</span>
        <span className="mt-[16px] text-[7.500px] leading-[10px]">21:46</span>
        <span className="text-[6.800px] leading-[11px] whitespace-nowrap">29/06/2021</span>
        <MessageSquare className="mt-[12px] w-[11px] h-[11px]" strokeWidth={1.300} />
      </div>
    </div>
  );
}

const Tick = () => (
  <svg viewBox="0 0 7 7" className="w-[7px] h-[7px] shrink-0" fill="none">
    <rect x="0.5" y="0.5" width="6" height="6" stroke="#666" />
    <path d="M1.500 3.500l1.500 2 2.500-4" stroke="#333" strokeWidth="0.7" />
  </svg>
);

const Node = ({ open }: { open?: boolean }) => (
  <svg viewBox="0 0 6 6" className="w-[6px] h-[6px] shrink-0" fill="none" stroke="#777" strokeWidth="0.7">
    <rect x="0.5" y="0.5" width="5" height="5" />
    <path d={open ? 'M1.500 3h3' : 'M1.500 3h3M3 1.500v3'} />
  </svg>
);

const colA = ['ShapeM', 'AutoM', 'SolidM', 'BlockM', 'NLineM', '2DMesh', 'TetraM', 'BlankM', 'BulkF', 'EleGen', 'NodEdit', 'EleEdit', 'Nurbs', 'Nurbs3D', 'MassTm', 'SpotWd', 'SphGen', 'DiscGen', 'MSMesh', 'Map', 'Pnt2Mesh'];
const menus = ['File', 'Misc.', 'View', 'Geometry', 'FEM', 'Application', 'Settings', 'Help'];

export default function App() {
  return (
    <div className="w-[1280px] h-[720px] flex overflow-hidden bg-[#f0f0f0] [font-family:'Liberation_Sans',Arial,sans-serif]">
      <Taskbar />
      <div className="flex-1 min-w-0 flex flex-col border-l border-[#222]">
        <div className="h-[14px] shrink-0 bg-white flex items-center pl-[1px] pt-[1px] relative">
          <div className="ml-[1px] w-[10px] h-[10px] bg-[#111] flex items-end justify-center">
            <span className="text-[4px] leading-[5px] text-white font-bold">LSP</span>
          </div>
          <span className="ml-[3px] text-[7.7px] text-[#8a8a8a] whitespace-nowrap">LS-PrePost(R) V4.8.13 - 19Mar2021-64bit C:\Users\user\Downloads\Bullet_mesh_cone.k</span>
          <div className="ml-auto flex items-center text-[#b0b0b0]">
            <Minus className="w-[9px] h-[9px]" />
            <svg viewBox="0 0 9 9" className="ml-[19px] w-[8px] h-[8px]" fill="none" stroke="currentColor"><path d="M2 2V.5h6.500V7H7M.5 2H7v6.500H.5z" /></svg>
            <X className="ml-[19px] mr-[13px] w-[9px] h-[9px]" />
          </div>
        </div>
        <div className="h-[14px] shrink-0 bg-white flex items-center pl-[4px] pt-[1px] gap-[9px] text-[8px] text-[#555]">
          {menus.map((m) => (
            <span key={m}>{m}</span>
          ))}
        </div>
        <div className="flex-1 min-h-0 flex border-t border-[#555]">
          <div className="relative flex-1 min-w-0 bg-white overflow-visible">
            <Cone />
            <div className="relative pl-[21px] pt-[6px] h-[21px] text-[16px] leading-[20px] font-bold text-black whitespace-nowrap">LS-DYNA keyword deck by LS-PrePost</div>
            <div className="relative pl-[2px] h-[8px] flex items-center">
              <div className="w-[6px] h-[5px] bg-[#777]" />
              <span className="ml-[3px] text-[9px] leading-none text-[#aaa]">&raquo;</span>
            </div>
            <div className="relative mt-[1px] pl-[3px] flex items-center h-[11px] text-[9px] text-[#111]">
              <Node open />
              <div className="ml-[2px]"><Tick /></div>
              <span className="ml-[2px]">Assembly 1</span>
            </div>
            <div className="relative pl-[11px] flex items-center h-[12px] text-[9px] text-[#111]">
              <div className="absolute left-[5px] top-[-3px] w-[5px] h-[9px] border-l border-b border-[#777]" />
              <Node />
              <div className="ml-[3px]"><Tick /></div>
              <span className="ml-[3px]">FEM Parts</span>
            </div>
            {/* global axes */}
            <svg viewBox="0 0 60 34" className="absolute left-[47px] top-[590px] w-[60px] h-[34px]" fill="none">
              <path d="M28 14L10 22" stroke="#c81818" strokeWidth="2" />
              <path d="M6 24l6-7 3 5z" fill="#c81818" />
              <path d="M28 14l-4-10" stroke="#1a9a1a" strokeWidth="2" />
              <path d="M23 2l5 8-7 1z" fill="#1a9a1a" />
              <path d="M28 14l14 4" stroke="#1a1ac8" strokeWidth="2" />
              <path d="M46 19l-8 3 1-7z" fill="#1a1ac8" />
              <path d="M24 14l6 10" stroke="#1a9a1a" strokeWidth="2" />
              <text x="2" y="26" fontSize="10" fontWeight="bold" fill="#111" stroke="none">X</text>
              <text x="47" y="19" fontSize="10" fontWeight="bold" fill="#111" stroke="none">Z</text>
            </svg>
            <ShapeMesher />
          </div>
          <div className="w-[73px] shrink-0 border-l border-[#555] bg-[#f0f0f0] flex">
            <div className="w-[33px] flex flex-col">
              {colA.map((n, i) => (
                <Tool key={n} name={n} active={i === 0} />
              ))}
            </div>
            <div className="w-[34px] flex flex-col">
              <Tool name="RefGeo" />
              <Tool name="Curve" />
              <Tool name="Surf" />
              <Tool name="Solid" />
              <Tool name="GeoTol" />
              <div className="h-[4px] mx-[2px] border-t border-[#bbb] mt-[1px]" />
              <Tool name="Mesh" active />
              <Tool name="Model" />
              <Tool name="EleTol" />
              <Tool name="Post" />
              <div className="h-[4px] mx-[2px] border-t border-[#bbb] mt-[2px]" />
              <Tool name="MS" />
              <Tool name="MFPre" />
              <Tool name="MFPost" />
              <Tool name="Favor1" />
            </div>
          </div>
        </div>
        <BottomBar />
        <div className="h-[16px] shrink-0 flex relative">
          <div className="w-[582px] bg-white border-r border-b border-[#999] pl-[2px] text-[9px] leading-[14px] font-bold text-[#222]">&gt;</div>
          <div className="w-[582px] bg-white border-b border-r border-[#999] flex flex-col justify-end overflow-hidden pl-[1px] text-[9.4px] leading-[9.500px] text-[#222] whitespace-nowrap">
            <div>meshing circleshell create 2.00593e-09 4.87153e-09 1 0.5 30 0 0 360 0 0 1 0 1 0</div>
            <div>meshing circleshell create 2.00593e-09 4.87153e-09 1 0.5 40 0 0 360 0 0 1 0 1 0</div>
          </div>
          <div className="absolute left-[911px] top-[-3px] text-[18.9px] leading-[20px] font-bold text-[#99a3e6] whitespace-nowrap">youtube.com/c/ameentopa</div>
          <svg viewBox="0 0 8 12" className="absolute left-[1153px] top-[1px] w-[7px] h-[13px]" fill="none" stroke="#444"><path d="M1 4l3-3 3 3M1 8l3 3 3-3" /></svg>
        </div>
        <div className="h-[16px] shrink-0 flex items-center justify-between bg-[#f0f0f0] pl-[1px] text-[7.8px] text-[#222]">
          <span className="font-semibold">Set step of density of circle</span>
          <span className="w-[96px] font-semibold">Fast Renderer</span>
        </div>
      </div>
    </div>
  );
}
